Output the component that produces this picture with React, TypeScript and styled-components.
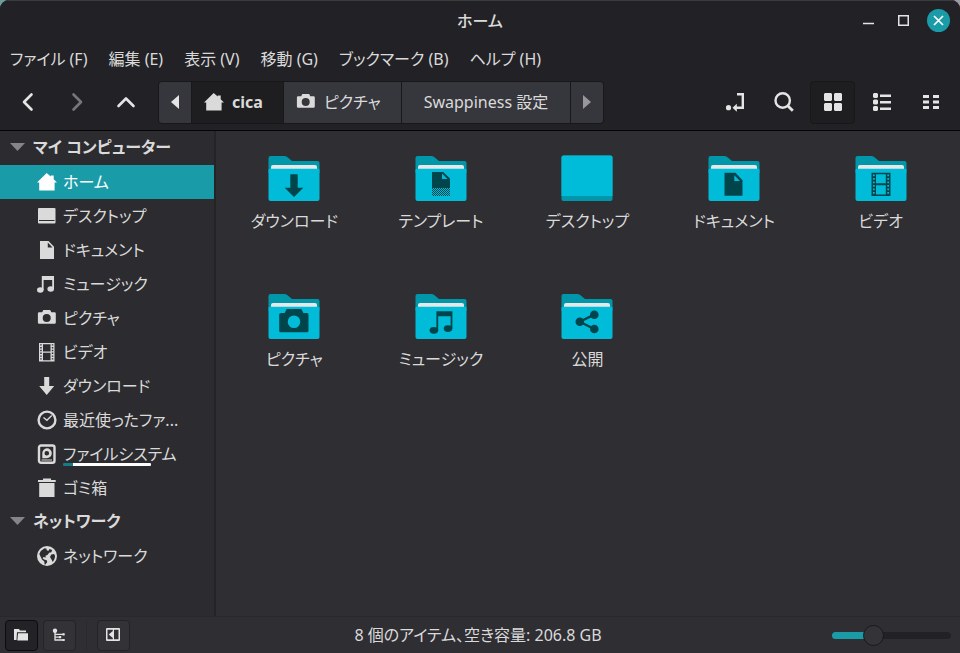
import React, { useState } from "react";
import styled, { createGlobalStyle, css } from "styled-components";

const color = {
  header: "#222226",
  headerDark: "#1e1e20",
  sidebar: "#2c2c30",
  content: "#2f2e33",
  segment: "#36373d",
  edge: "#18181a",
  accent: "#1a9ca8",
  text: "#dadada",
  icon: "#e4e4e4",
  folder: "#00bcd8",
  folderDark: "#0097aa",
  glyph: "#00454c",
};

const GlobalStyle = createGlobalStyle`
  * { box-sizing: border-box; }
  body {
    margin: 0;
    background: linear-gradient(to right, #6f9c9a, #9a9aa2);
    color: ${color.text};
    font: 16px/24px "Noto Sans", "Noto Sans CJK JP", sans-serif;
    font-feature-settings: "palt";
  }
  button, input { font: inherit; font-feature-settings: inherit; color: inherit; }
  button { margin: 0; padding: 0; border: 0; background: none; }
  svg { display: block; flex: none; }
`;

const Window = styled.div`
  display: flex;
  flex-direction: column;
  min-height: 100vh;
  overflow: hidden;
  background: ${color.content};
  border-radius: 9px 9px 0 0;
`;

const Header = styled.header`
  background: ${color.header};
  border-top: 1px solid #3a3d3d;
  border-bottom: 1px solid #050506;
`;

const TitleBar = styled.div`
  display: grid;
  grid-template-columns: 1fr auto 1fr;
  align-items: center;
  height: 39px;
  padding: 0 10px;
`;

const Title = styled.h1`
  grid-column: 2;
  margin: 0;
  font-size: 16px;
  font-weight: 500;
  line-height: 24px;
`;

const WindowControls = styled.div`
  display: flex;
  justify-content: flex-end;
  gap: 12px;
`;

const WindowButton = styled.button<{ $accent?: boolean }>`
  display: grid;
  place-items: center;
  width: 23px;
  height: 23px;
  border-radius: 50%;
  background: ${(p) => (p.$accent ? color.accent : "transparent")};
`;

const MenuBar = styled.nav`
  display: flex;
  gap: 21px;
  height: 40px;
  padding: 0 10px;
`;

const MenuButton = styled.button`
  height: 38px;
  white-space: nowrap;
`;

const Toolbar = styled.div`
  display: flex;
  align-items: center;
  gap: 4px;
  height: 50px;
  padding: 0 7px 6px 5px;
`;

const ToolButton = styled.button<{ $active?: boolean }>`
  display: grid;
  place-items: center;
  width: 45px;
  height: 43px;
  border: 1px solid transparent;
  border-radius: 4px;
  color: ${color.icon};
  ${(p) =>
    p.$active &&
    css`
      background: ${color.headerDark};
      border-color: ${color.edge};
    `}
  &:disabled { color: #77777a; }
`;

const PathBar = styled.div`
  display: flex;
  gap: 1px;
  height: 43px;
  margin: 0 auto 0 6px;
  border: 1px solid ${color.edge};
  border-radius: 4px;
  background: ${color.edge};
  overflow: hidden;
`;

const segmentPadding = {
  arrow: "0 12px",
  icon: "0 20px 0 12px",
  text: "0 22px",
};

const PathSegment = styled.button<{ $active?: boolean; $kind: keyof typeof segmentPadding }>`
  display: flex;
  align-items: center;
  gap: 8px;
  padding: ${(p) => segmentPadding[p.$kind]};
  background: ${(p) => (p.$active ? color.headerDark : color.segment)};
  font-weight: ${(p) => (p.$active ? 700 : 400)};
  white-space: nowrap;
`;

const Body = styled.div`
  display: grid;
  grid-template-columns: 216px 1fr;
  flex: 1;
`;

const Sidebar = styled.aside`
  background: ${color.sidebar};
  border-right: 2px solid #242427;
`;

const SectionButton = styled.button`
  display: flex;
  align-items: center;
  gap: 8px;
  width: 100%;
  height: 34px;
  padding: 0 0 2px 10px;
  font-weight: 700;
`;

const PlaceList = styled.ul`
  margin: 0;
  padding: 0;
  list-style: none;
`;

const PlaceButton = styled.button<{ $active?: boolean }>`
  display: flex;
  align-items: center;
  gap: 6px;
  width: 100%;
  height: 34px;
  padding: 0 0 1px 37px;
  color: ${(p) => (p.$active ? "#ffffff" : color.text)};
  background: ${(p) => (p.$active ? color.accent : "transparent")};
  --surface: ${(p) => (p.$active ? color.accent : color.sidebar)};
  white-space: nowrap;
`;

const PlaceName = styled.span`
  position: relative;
`;

const UsageBar = styled.span`
  position: absolute;
  left: 0;
  bottom: 0;
  width: 88px;
  height: 3px;
  border-radius: 1px;
  background: linear-gradient(to right, #147c86 11%, #ffffff 11%);
`;

const Files = styled.main`
  display: grid;
  grid-template-columns: repeat(auto-fill, minmax(140px, 1fr));
  grid-auto-rows: 138px;
  align-content: start;
  padding: 24px 6px 0 5px;
`;

const FileButton = styled.button`
  display: flex;
  flex-direction: column;
  align-items: center;
  justify-self: center;
  align-self: start;
  gap: 6px;
`;

const StatusBar = styled.footer`
  display: grid;
  grid-template-columns: 1fr auto 1fr;
  align-items: center;
  height: 37px;
  padding: 0 9px 0 5px;
  border-top: 1px solid #29292c;
`;

const PaneButtons = styled.div`
  display: flex;
  align-items: center;
  gap: 5px;
`;

const PaneButton = styled.button<{ $active?: boolean }>`
  display: grid;
  place-items: center;
  width: 33px;
  height: 31px;
  border: 1px solid ${(p) => (p.$active ? "#0c0c0d" : "#242427")};
  border-radius: 4px;
  background: ${(p) => (p.$active ? "#232327" : "#323237")};
  color: ${color.icon};
`;

const Separator = styled.span`
  width: 1px;
  height: 30px;
  margin: 0 5px;
  background: #2a2a2d;
`;

const track = css`
  height: 7px;
  border-radius: 4px;
  background: linear-gradient(to right, ${color.accent} var(--fill), #222226 var(--fill));
`;

const thumb = css`
  width: 21px;
  height: 21px;
  border: 1px solid #19191b;
  border-radius: 50%;
  background: #333338;
`;

const ZoomSlider = styled.input`
  appearance: none;
  justify-self: end;
  width: 119px;
  height: 21px;
  margin: 0;
  background: transparent;
  &::-webkit-slider-runnable-track { ${track} }
  &::-webkit-slider-thumb { appearance: none; margin-top: -7px; ${thumb} }
  &::-moz-range-track { ${track} }
  &::-moz-range-thumb { ${thumb} }
`;

type GlyphName =
  | "home" | "desktop" | "document" | "music" | "camera" | "video"
  | "download" | "recent" | "disk" | "trash" | "globe";

const filmHoles = [2.2, 5, 7.8, 10.6, 13.4, 16.2];

const glyphs: Record<GlyphName, React.ReactNode> = {
  home: <path d="M9.7 1 0 10.4h2.2v8.1h15.4v-8.1H20l-3.3-3.2V3.5h-3v.9z" />,
  desktop: (
    <>
      <rect x="1" y="2" width="17.5" height="15.5" rx="1" />
      <path d="M2 14.5h15.500" stroke="var(--surface)" />
    </>
  ),
  document: <path fillRule="evenodd" d="M3 1h8.5L17 6.7V19H3zM10.8 2.6v4.8h4.7z" />,
  music: (
    <>
      <path d="M4.800 2H17v13h-1.800V6H6.600v10H4.800z" />
      <ellipse cx="3.3" cy="16" rx="3.3" ry="2.700" />
      <ellipse cx="13.700" cy="15" rx="3.300" ry="2.700" />
    </>
  ),
  camera: (
    <path
      fillRule="evenodd"
      d="M2 4.3h3.2L6.3 2h6.9l1.1 2.3h3.2q1.3 0 1.3 1.3v8.9q0 1.3-1.3 1.3H2.2q-1.3 0-1.3-1.3V5.6Q.9 4.3 2 4.3zM9.7 6a4 4 0 1 0 0 8 4 4 0 0 0 0-8z"
    />
  ),
  video: (
    <>
      <path fillRule="evenodd" d="M2 1h15.5v18.5H2zM6 2.2v7.2h7.5V2.2zM6 10.8v7.4h7.5v-7.4z" />
      {filmHoles.map((y) => (
        <path key={y} d={`M3.2 ${y}h1.5v1.4H3.2zM14.8 ${y}h1.5v1.4h-1.5z`} fill="var(--surface)" />
      ))}
    </>
  ),
  download: <path d="M7.2 1h5v9h5l-7.5 9-7.5-9h5z" />,
  recent: (
    <>
      <circle cx="10" cy="10" r="8.4" fill="none" stroke="currentColor" strokeWidth="2.4" />
      <path d="m6.500 7.500 3.400 2.800 4.800-4.800" fill="none" stroke="currentColor" strokeWidth="1.4" />
    </>
  ),
  disk: (
    <>
      <rect x="2" y="1.500" width="15.500" height="17.200" rx="2" fill="none" stroke="currentColor" strokeWidth="2.4" />
      <path fillRule="evenodd" d="M9.8 4.3a5 5 0 1 1 0 10H5.3V9.3a4.8 4.8 0 0 1 4.5-5zm0 2.7a2.3 2.3 0 1 0 0 4.6 2.3 2.3 0 0 0 0-4.6z" />
      <path d="M4.5 16H15" stroke="currentColor" />
    </>
  ),
  trash: <path d="M6 .5h8V2h4.7v2H1V2h5zM2.2 5h15.3v14H2.2z" />,
  globe: (
    <>
      <circle cx="10" cy="10" r="10" />
      <path
        d="m2.3 8 1.5-3L7.5 2.3l2.2.4-.2 1.4 1.8.8 1.2-1.8 2.7 1-.9 2.2-2.2.5-1.4 2-2.2 1 .3 1.6-2.3-.3-1 1.2 1.6 1.3 2.6.7.6 1.7-1.9 2.6-.8-.1-.3-3.1L5 13.6zM13 11l1.3-2.6 2.8-.3 1 1.8-.6 3-1.7 3-1.3-2.3z"
        fill="var(--surface)"
      />
    </>
  ),
};

const Glyph = ({ name }: { name: GlyphName }) => (
  <svg width="20" height="20" viewBox="0 0 20 20" fill="currentColor" aria-hidden="true">
    {glyphs[name]}
  </svg>
);

type FolderKind = "download" | "template" | "document" | "video" | "camera" | "music" | "share";

const checkerRows = [33, 35, 37, 39];
const reelHoles = [19.5, 23, 26.5, 30, 33.5, 37];

const emblems: Record<FolderKind, React.ReactNode> = {
  download: <path d="M22.3 19.3h7.4v13.4h5.6L26 42l-9.3-9.3h5.6z" />,
  template: (
    <>
      <path fillRule="evenodd" d="M17 17h11.200l6.800 6.500V33H17zM27 18.400v5.700h5.600z" />
      {checkerRows.map((y) => (
        <path key={y} d={`M17 ${y + 0.5}h18M18 ${y + 1.5}h17`} stroke={color.glyph} strokeDasharray="1 1" shapeRendering="crispEdges" />
      ))}
    </>
  ),
  document: <path fillRule="evenodd" d="M16.5 17.8h11l7 7.5v15.4h-18zM26.3 20.2V26h5.7z" />,
  video: (
    <>
      <path fillRule="evenodd" d="M16.5 17.8h19V41h-19zM21 19.3v9h9.8v-9zM21 30.2v9.3h9.8v-9.3z" />
      {reelHoles.map((y) => (
        <path key={y} d={`M18 ${y}h1.7v1.8H18zM32.3 ${y}H34v1.8h-1.7z`} fill={color.folder} />
      ))}
    </>
  ),
  camera: (
    <path
      fillRule="evenodd"
      d="M13 20h3.6l2-4h14.8l2 4H39q1.5 0 1.5 1.5v16.3q0 1.5-1.5 1.5H12.7q-1.5 0-1.5-1.5V21.5Q11.2 20 13 20zM26 22.4a6.3 6.3 0 1 0 0 12.6 6.3 6.3 0 0 0 0-12.6z"
    />
  ),
  music: (
    <>
      <path d="M21.4 18.3h16v17.3h-1.8V23.2H23.2v14h-1.8z" />
      <ellipse cx="18.9" cy="37.3" rx="4.3" ry="3.4" />
      <ellipse cx="33" cy="35.6" rx="4.3" ry="3.4" />
    </>
  ),
  share: (
    <>
      <path d="M33.3 21.7 18.8 28.7l14.5 7.3" fill="none" stroke={color.glyph} strokeWidth="2.4" />
      <circle cx="18.8" cy="28.7" r="4.3" />
      <circle cx="33.3" cy="21.7" r="4.3" />
      <circle cx="33.3" cy="36" r="4.3" />
    </>
  ),
};

const FolderIcon = ({ kind }: { kind: FolderKind | "desktop" }) => (
  <svg width="52" height="48" viewBox="0 0 52 48" aria-hidden="true">
    {kind === "desktop" ? (
      <>
        <rect x=".5" y=".5" width="51" height="45.5" rx="2" fill={color.folderDark} />
        <path d="M.5 41V2.5q0-2 2-2h47q2 0 2 2V41z" fill={color.folder} />
      </>
    ) : (
      <>
        <path d="M.5 18V3q0-2 2-2H16q2 0 3.5 1.3L24 6h25.5q2 0 2 2v10z" fill={color.folderDark} />
        <path d="M3 15v-3q0-2 2-2h42q2 0 2 2v3z" fill="#e6e8e8" />
        <path d="M.5 15q0-1.2 1.3-1.2h48.4q1.3 0 1.3 1.2v29q0 2-2 2h-47q-2 0-2-2z" fill={color.folder} />
        <g fill={color.glyph}>{emblems[kind]}</g>
      </>
    )}
  </svg>
);

const Chevron = ({ d }: { d: string }) => (
  <svg width="20" height="20" viewBox="0 0 20 20" fill="none" stroke="currentColor" strokeWidth="2.6" strokeLinecap="round" strokeLinejoin="round" aria-hidden="true">
    <path d={d} />
  </svg>
);

const SolidIcon = ({ d, size = 20 }: { d: string; size?: number }) => (
  <svg width={size} height={size} viewBox={`0 0 ${size} ${size}`} fill="currentColor" aria-hidden="true">
    <path fillRule="evenodd" d={d} />
  </svg>
);

const ScrollArrow = ({ d, fill }: { d: string; fill: string }) => (
  <svg width="8" height="14" viewBox="0 0 8 14" fill={fill} aria-hidden="true">
    <path d={d} />
  </svg>
);

const menus = ["ファイル (F)", "編集 (E)", "表示 (V)", "移動 (G)", "ブックマーク (B)", "ヘルプ (H)"];

const computerPlaces: { name: string; glyph: GlyphName; usage?: boolean }[] = [
  { name: "ホーム", glyph: "home" },
  { name: "デスクトップ", glyph: "desktop" },
  { name: "ドキュメント", glyph: "document" },
  { name: "ミュージック", glyph: "music" },
  { name: "ピクチャ", glyph: "camera" },
  { name: "ビデオ", glyph: "video" },
  { name: "ダウンロード", glyph: "download" },
  { name: "最近使ったファ...", glyph: "recent" },
  { name: "ファイルシステム", glyph: "disk", usage: true },
  { name: "ゴミ箱", glyph: "trash" },
];

const files: { name: string; kind: FolderKind | "desktop" }[] = [
  { name: "ダウンロード", kind: "download" },
  { name: "テンプレート", kind: "template" },
  { name: "デスクトップ", kind: "desktop" },
  { name: "ドキュメント", kind: "document" },
  { name: "ビデオ", kind: "video" },
  { name: "ピクチャ", kind: "camera" },
  { name: "ミュージック", kind: "music" },
  { name: "公開", kind: "share" },
];

const SectionHeading = ({ children }: { children: React.ReactNode }) => (
  <SectionButton aria-expanded="true">
    <svg width="15" height="8" viewBox="0 0 15 8" aria-hidden="true">
      <path d="M0 0h15L7.5 8z" fill="#858588" />
    </svg>
    {children}
  </SectionButton>
);

export default function App() {
  const [zoom, setZoom] = useState(32);
  const [place, setPlace] = useState("ホーム");

  return (
    <>
      <GlobalStyle />
      <Window>
        <Header>
          <TitleBar>
            <Title>ホーム</Title>
            <WindowControls>
              <WindowButton aria-label="最小化">
                <svg width="11" height="11" viewBox="0 0 11 11"><path d="M0 8.5h11" stroke={color.icon} strokeWidth="1.5" /></svg>
              </WindowButton>
              <WindowButton aria-label="最大化">
                <svg width="11" height="11" viewBox="0 0 11 11"><rect x=".75" y=".75" width="9.5" height="9.5" fill="none" stroke={color.icon} strokeWidth="1.5" /></svg>
              </WindowButton>
              <WindowButton $accent aria-label="閉じる">
                <svg width="11" height="11" viewBox="0 0 11 11"><path d="m1 1 9 9m0-9-9 9" stroke="#fff" strokeWidth="1.7" /></svg>
              </WindowButton>
            </WindowControls>
          </TitleBar>
          <MenuBar>
            {menus.map((menu) => <MenuButton key={menu}>{menu}</MenuButton>)}
          </MenuBar>
          <Toolbar>
            <ToolButton aria-label="戻る"><Chevron d="M13.5 2.5 6 10l7.5 7.5" /></ToolButton>
            <ToolButton aria-label="進む" disabled><Chevron d="M6.5 2.5 14 10l-7.5 7.5" /></ToolButton>
            <ToolButton aria-label="上へ"><Chevron d="M2.5 14 10 6.5l7.5 7.5" /></ToolButton>
            <PathBar>
              <PathSegment $kind="arrow" aria-label="前へスクロール"><ScrollArrow d="M8 0v14L0 7z" fill={color.icon} /></PathSegment>
              <PathSegment $kind="icon" $active><Glyph name="home" />cica</PathSegment>
              <PathSegment $kind="icon"><Glyph name="camera" />ピクチャ</PathSegment>
              <PathSegment $kind="text">Swappiness 設定</PathSegment>
              <PathSegment $kind="arrow" aria-label="次へスクロール"><ScrollArrow d="M0 0v14l8-7z" fill="#98989c" /></PathSegment>
            </PathBar>
            <ToolButton aria-label="場所を入力">
              <svg width="20" height="20" viewBox="0 0 20 20" fill="none" stroke="currentColor" strokeWidth="2.4" aria-hidden="true">
                <path d="M12 2.3h5.8v13.4H11" />
                <path d="m7.500 15.700 4.300-4v8z" fill="currentColor" stroke="none" />
                <circle cx="3.500" cy="15.700" r="2.600" fill="currentColor" stroke="none" />
              </svg>
            </ToolButton>
            <ToolButton aria-label="検索">
              <svg width="20" height="20" viewBox="0 0 20 20" fill="none" stroke="currentColor" strokeWidth="2.4" aria-hidden="true">
                <circle cx="8.7" cy="8.5" r="7.200" /><path d="m13.5 13.5 5.300 5.300" strokeWidth="2.8" />
              </svg>
            </ToolButton>
            <ToolButton $active aria-label="アイコン表示">
              <SolidIcon d="M2 1h6l1 1v6l-1 1H2L1 8V2zM12 1h6l1 1v6l-1 1h-6l-1-1V2zM2 11h6l1 1v6l-1 1H2l-1-1v-6zM12 11h6l1 1v6l-1 1h-6l-1-1v-6z" />
            </ToolButton>
            <ToolButton aria-label="リスト表示">
              <SolidIcon d="M2 1h3l1 1v3L5 6H2L1 5V2zM2 7.5h3l1 1v3l-1 1H2l-1-1v-3zM2 14h3l1 1v3l-1 1H2l-1-1v-3zM8 2.500h11v2.400H8zM8 9h11v2.400H8zM8 15.500h11v2.400H8z" />
            </ToolButton>
            <ToolButton aria-label="コンパクト表示">
              <SolidIcon d="M2 3h6v3H2zM2 8.5h6v3H2zM2 14h6v3H2zM12 3h6v3h-6zM12 8.5h6v3h-6zM12 14h6v3h-6z" />
            </ToolButton>
          </Toolbar>
        </Header>
        <Body>
          <Sidebar>
            <SectionHeading>マイ コンピューター</SectionHeading>
            <PlaceList>
              {computerPlaces.map((item) => (
                <li key={item.name}>
                  <PlaceButton $active={place === item.name} onClick={() => setPlace(item.name)}>
                    <Glyph name={item.glyph} />
                    <PlaceName>
                      {item.name}
                      {item.usage && <UsageBar />}
                    </PlaceName>
                  </PlaceButton>
                </li>
              ))}
            </PlaceList>
            <SectionHeading>ネットワーク</SectionHeading>
            <PlaceList>
              <li>
                <PlaceButton $active={place === "network"} onClick={() => setPlace("network")}>
                  <Glyph name="globe" />
                  <PlaceName>ネットワーク</PlaceName>
                </PlaceButton>
              </li>
            </PlaceList>
          </Sidebar>
          <Files>
            {files.map((file) => (
              <FileButton key={file.name}>
                <FolderIcon kind={file.kind} />
                <span>{file.name}</span>
              </FileButton>
            ))}
          </Files>
        </Body>
        <StatusBar>
          <PaneButtons>
            <PaneButton $active aria-label="場所">
              <SolidIcon size={15} d="M0 1h5l1 1.500h6v1.700H3L2.500 12H0zM4 5.200h10V12.500H3.300z" />
            </PaneButton>
            <PaneButton aria-label="ツリー">
              <svg width="15" height="15" viewBox="0 0 15 15" fill="none" stroke="currentColor" strokeWidth="1.3" aria-hidden="true">
                <circle cx="3" cy="2.700" r="2.200" fill="currentColor" stroke="none" />
                <path d="M3 2.700v9.300h9M3 6.300h9M3 9.200h5" />
                <path d="M10.500 5.200h2.200v2.200h-2.200zM7 8.100h2.200v2.200H7zM10.500 10.900h2.200v2.200h-2.200z" fill="currentColor" stroke="none" />
              </svg>
            </PaneButton>
            <Separator />
            <PaneButton aria-label="サイドバーを隠す">
              <SolidIcon size={15} d="M1 0h12q1 0 1 1v11q0 1-1 1H1q-1 0-1-1V1q0-1 1-1zM1.500 1.700v9.600h5.300V1.700zM8 1.700v9.600h4.500V1.700zM6.800 3v7L2.700 6.500z" />
            </PaneButton>
          </PaneButtons>
          <span role="status">8 個のアイテム、空き容量: 206.8 GB</span>
          <ZoomSlider
            type="range"
            min={0}
            max={100}
            value={zoom}
            onChange={(event) => setZoom(Number(event.target.value))}
            aria-label="ズーム"
            style={{ "--fill": `${zoom}%` } as React.CSSProperties}
          />
        </StatusBar>
      </Window>
    </>
  );
}
